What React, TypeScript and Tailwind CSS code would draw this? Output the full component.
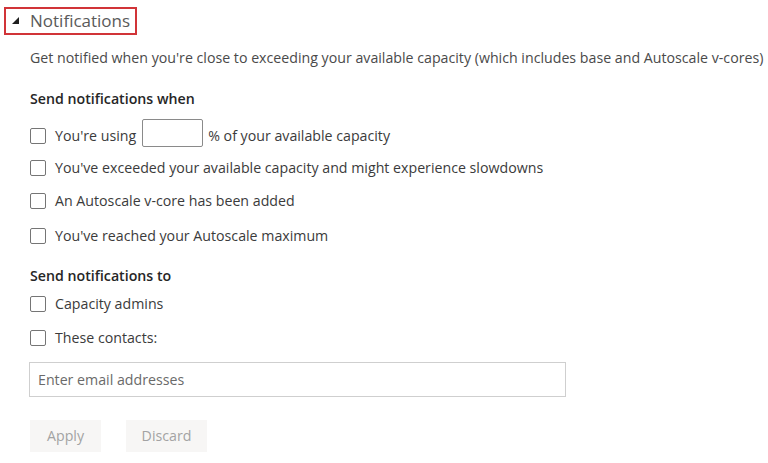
import React from "react";

function Box({ className = "" }: { className?: string }) {
  return <span className={"inline-block w-[16px] h-[16px] border border-[#757575] rounded-[2px] bg-white shrink-0 " + className} />;
}

function Row({ children, className = "" }: { children: React.ReactNode; className?: string }) {
  return (
    <label className={"flex items-center h-[20px] gap-[9px] " + className}>
      <Box />
      <span className="whitespace-nowrap">{children}</span>
    </label>
  );
}

export default function App() {
  return (
    <div
      className="w-[768px] h-[463px] bg-white overflow-hidden text-[14.2px] leading-[20px] text-[#3b3b3b]"
      style={{ fontFamily: '"Open Sans", "Noto Sans", sans-serif' }}
    >
      <div className="pt-[7px] pl-[4px]">
        <div className="flex items-center w-[133px] h-[28px] border-2 border-[#d13438]">
          <svg width="8" height="8" viewBox="0 0 8 8" className="ml-[5px]">
            <polygon points="8,0 8,7 1,7" fill="#1f1f1f" />
          </svg>
          <span className="ml-[11px] text-[17px] leading-[24px] text-[#5a5a5a]">Notifications</span>
        </div>
      </div>
      <div className="pl-[30px]">
        <div className="mt-[13px] whitespace-nowrap text-[#4a4a4a]">
          Get notified when you're close to exceeding your available capacity (which includes base and Autoscale v-cores)
        </div>
        <div className="mt-[21px] font-semibold text-[#262626]">Send notifications when</div>
        <label className="mt-[10px] flex items-start h-[28px] gap-[9px]">
          <Box className="mt-[9px]" />
          <span className="mt-[7px] whitespace-nowrap">You're using</span>
          <span className="ml-[-3px] inline-block w-[61px] h-[28px] border border-[#8a8a8a] rounded-[2px]" />
          <span className="mt-[7px] ml-[-4px] whitespace-nowrap">% of your available capacity</span>
        </label>
        <Row className="mt-[11px]">You've exceeded your available capacity and might experience slowdowns</Row>
        <Row className="mt-[13px]">An Autoscale v-core has been added</Row>
        <Row className="mt-[15px]">You've reached your Autoscale maximum</Row>
        <div className="mt-[20px] font-semibold text-[#262626]">Send notifications to</div>
        <Row className="mt-[8px]">Capacity admins</Row>
        <Row className="mt-[14px]">These contacts:</Row>
        <div className="mt-[14px] ml-[-1px] w-[537px] h-[35px] border border-[#cfcfcf] flex items-center pl-[8px] text-[#6a6a6a]">
          Enter email addresses
        </div>
        <div className="mt-[23px] flex gap-[25px]">
          <button className="w-[71px] h-[32px] bg-[#f7f6f5] text-[#a3a3a3] text-[14.2px]">Apply</button>
          <button className="w-[81px] h-[32px] bg-[#f7f6f5] text-[#a3a3a3] text-[14.2px]">Discard</button>
        </div>
      </div>
    </div>
  );
}
